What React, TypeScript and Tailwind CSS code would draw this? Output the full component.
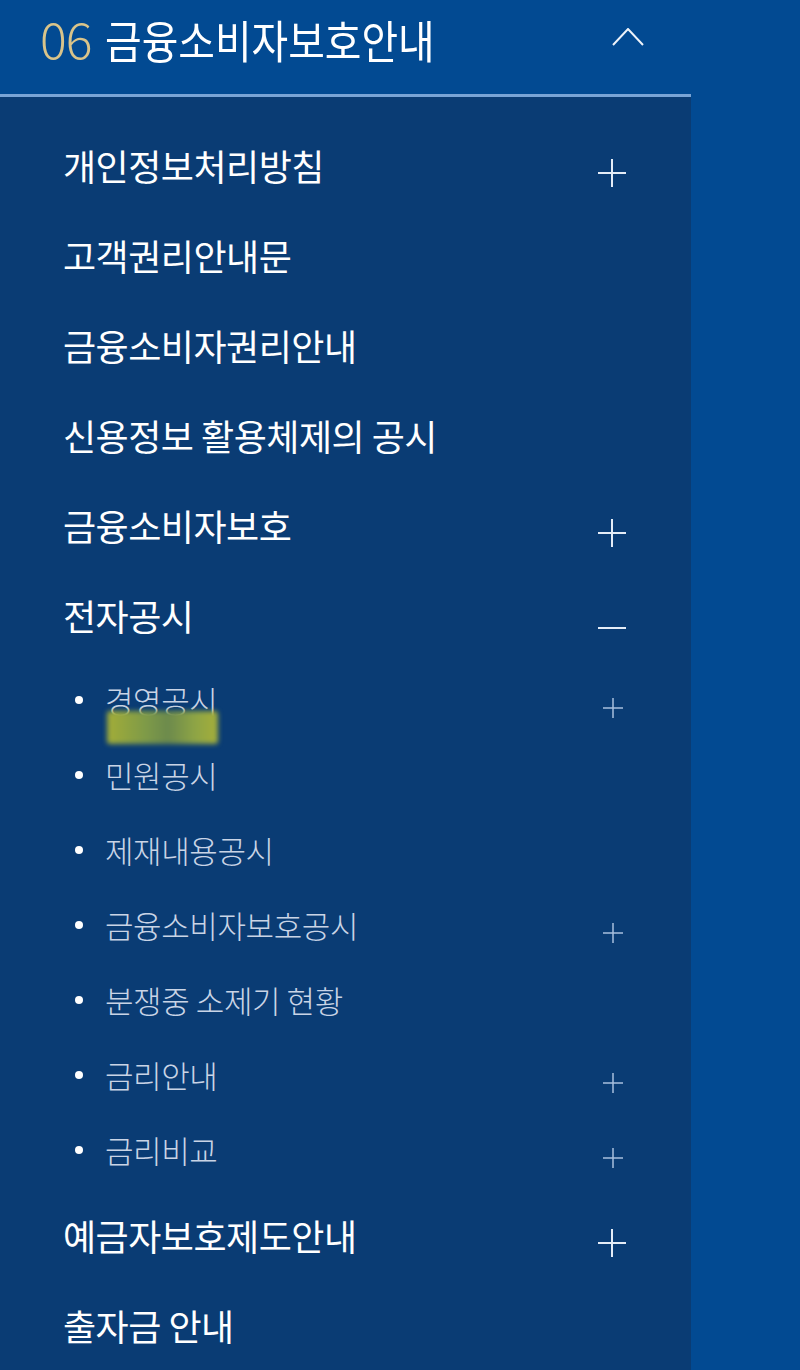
import { Fragment } from 'react';

const FONT = { fontFamily: '"Noto Sans CJK KR", "Noto Sans", sans-serif' };

type SubItem = { label: string; expandable?: boolean; marked?: boolean };

const topItems = [
    { label: '개인정보처리방침', expandable: true },
    { label: '고객권리안내문' },
    { label: '금융소비자권리안내' },
    { label: '신용정보 활용체제의 공시' },
    { label: '금융소비자보호', expandable: true },
];

const subItems: SubItem[] = [
    { label: '경영공시', expandable: true, marked: true },
    { label: '민원공시' },
    { label: '제재내용공시' },
    { label: '금융소비자보호공시', expandable: true },
    { label: '분쟁중 소제기 현황' },
    { label: '금리안내', expandable: true },
    { label: '금리비교', expandable: true },
];

const bottomItems = [
    { label: '예금자보호제도안내', expandable: true },
    { label: '출자금 안내' },
];

const PlusIcon = ({ size, stroke, color }: { size: number; stroke: number; color: string }) => (
    <svg width={size} height={size} viewBox={`0 0 ${size} ${size}`} fill="none">
        <line x1={size / 2} y1={0} x2={size / 2} y2={size} stroke={color} strokeWidth={stroke} />
        <line x1={0} y1={size / 2} x2={size} y2={size / 2} stroke={color} strokeWidth={stroke} />
    </svg>
);

const MainRow = ({ label, icon }: { label: string; icon?: 'plus' | 'minus' }) => (
    <div className="h-[90px] flex items-center justify-between pl-[63px] pr-[65px]">
        <span className="text-[36px] leading-none text-white whitespace-nowrap tracking-[-0.5px]">
            {label}
        </span>
        <div className="w-[28px] h-[28px] flex items-center justify-center mt-[15px]">
            {icon === 'plus' && <PlusIcon size={28} stroke={2} color="#e4ecf7" />}
            {icon === 'minus' && <div className="w-[28px] h-[2px] bg-[#e4ecf7] mt-[10px]" />}
        </div>
    </div>
);

const SubRow = ({ item }: { item: SubItem }) => (
    <div className="relative h-[75px] flex items-center justify-between pl-[75px] pr-[68px]">
        <div className="flex items-center gap-[22px]">
            <div className="w-[8px] h-[8px] rounded-full bg-white" />
            <span className="text-[31px] leading-none font-light text-[#c9d4e6] whitespace-nowrap tracking-[-0.4px]">
                {item.label}
            </span>
        </div>
        <div className="w-[20px] h-[20px] flex items-center justify-center mt-[16px]">
            {item.expandable && <PlusIcon size={20} stroke={1.5} color="#a9bfde" />}
        </div>
        {item.marked && (
            <div className="absolute left-[107px] top-[49px] w-[111px] h-[33px] rounded-[3px] blur-[2.5px] bg-[linear-gradient(90deg,#a2ad38_0%,#7e9a48_35%,#6c8a4c_55%,#8fa545_80%,#a4ae3a_100%)]" />
        )}
    </div>
);

export default function App() {
    return (
        <div className="w-[800px] h-[1370px] bg-[#024a92] flex overflow-hidden" style={FONT}>
            <div className="w-[691px] flex flex-col">
                {/* Section header */}
                <div className="h-[96px] flex items-center justify-between pl-[40px] pr-[47px]">
                    <div className="flex items-baseline mb-[20px]">
                        <span className="text-[50px] leading-none font-light text-[#d9c48a] tracking-[-1px]">06</span>
                        <span className="ml-[13px] text-[45px] leading-none text-white inline-block origin-left scale-x-[0.885] whitespace-nowrap">
                            금융소비자보호안내
                        </span>
                    </div>
                    <svg width="32" height="18" viewBox="0 0 32 18" fill="none" className="mb-[20px]">
                        <polyline points="1,17 16,1 31,17" stroke="#eef3fa" strokeWidth="2" fill="none" />
                    </svg>
                </div>
                <div className="h-[3px] mt-[1px] bg-[#79a4d6]" />

                {/* Menu panel */}
                <div className="flex-1 bg-[#0a3c74] pt-[23px]">
                    {topItems.map((it) => (
                        <MainRow key={it.label} label={it.label} icon={it.expandable ? 'plus' : undefined} />
                    ))}
                    <MainRow label="전자공시" icon="minus" />
                    <div className="pt-[2px]">
                        {subItems.map((it) => (
                            <SubRow key={it.label} item={it} />
                        ))}
                    </div>
                    <div className="mt-[3px]">
                        {bottomItems.map((it) => (
                            <Fragment key={it.label}>
                                <MainRow label={it.label} icon={it.expandable ? 'plus' : undefined} />
                            </Fragment>
                        ))}
                    </div>
                </div>
            </div>
        </div>
    );
}
